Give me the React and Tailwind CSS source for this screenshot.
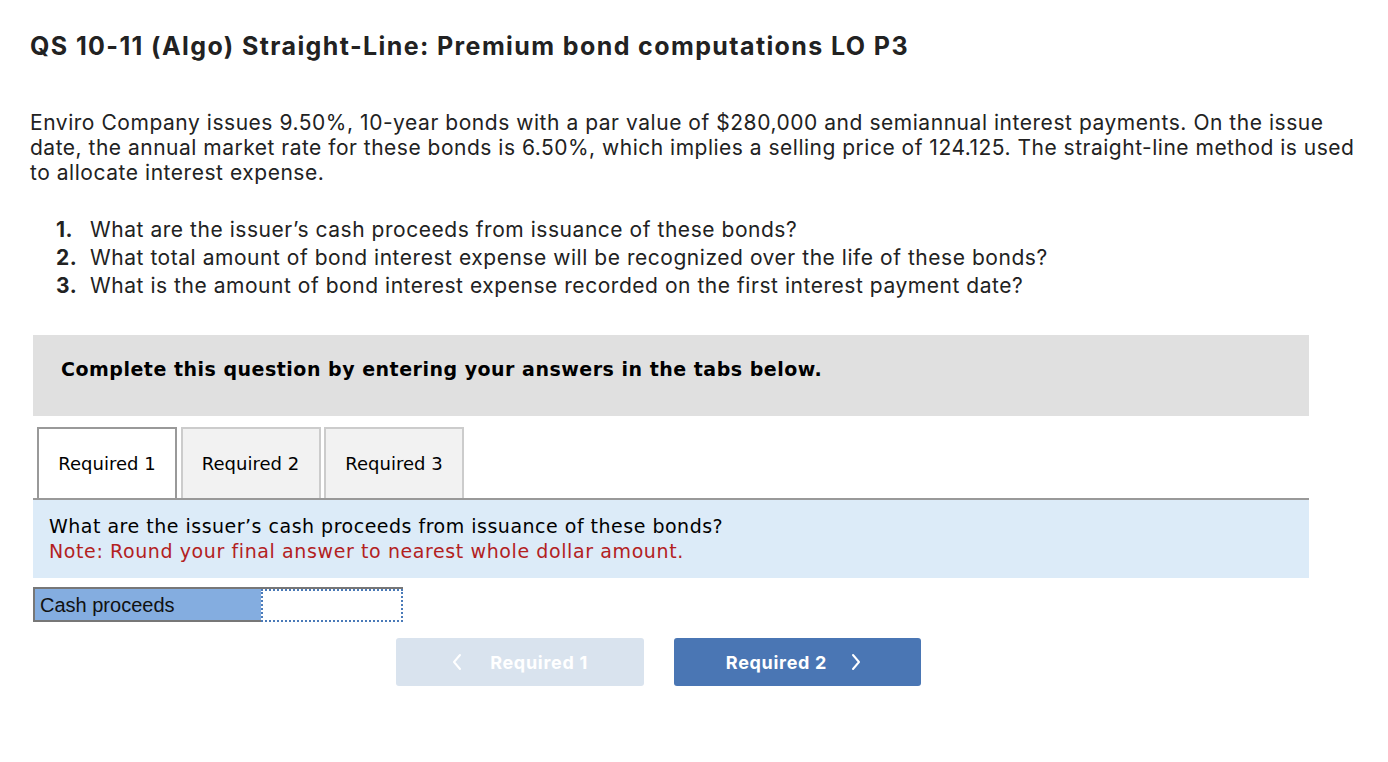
import React from "react";

const Chevron = ({ dir = "right", className = "" }) => (
  <svg width="10" height="18" viewBox="0 0 10 18" className={className} fill="none" stroke="currentColor" strokeWidth="2" strokeLinecap="round" strokeLinejoin="round">
    {dir === "right" ? <polyline points="2,2 8,9 2,16" /> : <polyline points="8,2 2,9 8,16" />}
  </svg>
);

export default function App() {
  return (
    <div className="w-[1388px] h-[762px] bg-white overflow-hidden text-[#222] font-['Inter',sans-serif]">
      <div className="pl-[30px] pt-[31px]">
        <h1 className="text-[25px] leading-[30px] font-bold tracking-[1.4px] whitespace-nowrap">
          QS 10-11 (Algo) Straight-Line: Premium bond computations LO P3
        </h1>
        <div className="mt-[49px] text-[21px] leading-[25px] tracking-[0.54px] whitespace-nowrap">
          <div>Enviro Company issues 9.50%, 10-year bonds with a par value of $280,000 and semiannual interest payments. On the issue</div>
          <div className="tracking-[0.5px]">date, the annual market rate for these bonds is 6.50%, which implies a selling price of 124.125. The straight-line method is used</div>
          <div>to allocate interest expense.</div>
        </div>
        <ol className="mt-[31px] text-[21px] leading-[28px] tracking-[0.54px] whitespace-nowrap">
          <li className="flex"><span className="w-[34px] pl-[26px] font-bold box-content shrink-0">1.</span><span>What are the issuer’s cash proceeds from issuance of these bonds?</span></li>
          <li className="flex"><span className="w-[34px] pl-[26px] font-bold box-content shrink-0">2.</span><span>What total amount of bond interest expense will be recognized over the life of these bonds?</span></li>
          <li className="flex"><span className="w-[34px] pl-[26px] font-bold box-content shrink-0">3.</span><span>What is the amount of bond interest expense recorded on the first interest payment date?</span></li>
        </ol>
      </div>

      <div className="ml-[33px] w-[1276px]">
        <div className="mt-[35px] h-[81px] bg-[#e0e0e0] pl-[28px] pt-[23px] font-['DejaVu_Sans',sans-serif] text-[19px] tracking-[0.5px] leading-[22px] font-bold text-black">
          Complete this question by entering your answers in the tabs below.
        </div>

        <div className="mt-[11px] flex items-end gap-[3.5px] pl-[4px] border-b-2 border-[#999] font-['DejaVu_Sans',sans-serif] text-[18px] text-black">
          <div className="w-[140px] h-[71px] bg-white border-2 border-b-0 border-[#999] flex items-center justify-center">Required 1</div>
          <div className="w-[140px] h-[71px] bg-[#f2f2f2] border-2 border-b-0 border-[#ccc] flex items-center justify-center">Required 2</div>
          <div className="w-[140px] h-[71px] bg-[#f2f2f2] border-2 border-b-0 border-[#ccc] flex items-center justify-center">Required 3</div>
        </div>

        <div className="h-[78px] bg-[#dcebf8] pl-[16px] pt-[14px] font-['DejaVu_Sans',sans-serif] text-[19px] leading-[25px] whitespace-nowrap">
          <div className="text-black tracking-[0.5px]">What are the issuer’s cash proceeds from issuance of these bonds?</div>
          <div className="text-[#b3211e] tracking-[0.6px]">Note: Round your final answer to nearest whole dollar amount.</div>
        </div>

        <div className="mt-[9px] flex h-[35px] w-[370px] border-t-2 border-[#777]">
          <div className="w-[228px] h-full bg-[#84ade0] border-l-2 border-b-2 border-[#777] flex items-center pl-[5px] font-['Liberation_Sans',sans-serif] text-[20px] text-[#111]">
            Cash proceeds
          </div>
          <div className="w-[142px] h-full bg-white border-2 border-dotted border-[#4a7ab8]"></div>
        </div>

        <div className="mt-[16px] ml-[363px] flex gap-[30px] font-['Inter',sans-serif] text-[18px] tracking-[0.7px] font-bold text-white">
          <div className="w-[248px] h-[48px] rounded-[3px] bg-[#d9e3ee] flex items-center justify-center">
            <Chevron dir="left" className="mr-[28px]" />
            <span>Required 1</span>
          </div>
          <div className="w-[247px] h-[48px] rounded-[3px] bg-[#4a76b4] flex items-center justify-center pr-[8px]">
            <span>Required 2</span>
            <Chevron dir="right" className="ml-[24px]" />
          </div>
        </div>
      </div>
    </div>
  );
}
